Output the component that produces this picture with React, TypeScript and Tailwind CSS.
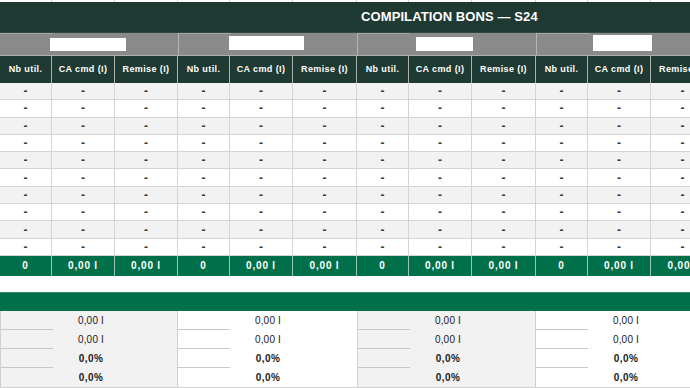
import React from "react"

const cols = "grid grid-cols-[52px_63px_63px_52px_63px_64px_52px_63px_64px_52px_63px_64px]"
const groups = [0, 1, 2, 3]
const groupW = ["w-[178px]", "w-[179px]", "w-[179px]", "w-[179px]"]
const boxes = [
    "ml-[50px] w-[76px] mt-[4px] h-[13px]",
    "ml-[50px] w-[75px] mt-[2px] h-[14px]",
    "ml-[58px] w-[57px] mt-[3px] h-[14px]",
    "ml-[56px] w-[59px] mt-[1px] h-[16px]",
]
const heads = ["Nb util.", "CA cmd (I)", "Remise (I)"]
const totals = ["0", "0,00 I", "0,00 I"]
const lower = [
    { v: "0,00 I", bold: false },
    { v: "0,00 I", bold: false },
    { v: "0,0%", bold: true },
    { v: "0,0%", bold: true },
]

export default function App() {
    return (
        <div className="w-[690px] h-[388px] overflow-hidden bg-white font-['Liberation_Sans',Arial,sans-serif]">
            <div className="w-[715px]">
                {/* top sliver of the sheet above */}
                <div className={`${cols} h-[2px]`}>
                    {Array.from({ length: 12 }).map((_, i) => (
                        <div key={i} className="border-r border-[#d4d4d4]" />
                    ))}
                </div>

                {/* title */}
                <div className="h-[31px] bg-[#1f3a32] flex items-center pl-[361px] border-b border-[#2c4a41]">
                    <span className="text-white font-bold text-[13px] tracking-[0.1px]">COMPILATION BONS — S24</span>
                </div>

                {/* week boxes */}
                <div className="flex h-[22px] bg-[#8a8a8a]">
                    {groups.map((g) => (
                        <div key={g} className={`${groupW[g]} h-full ${g > 0 ? "border-l border-[#b4b4b4]" : ""}`}>
                            <div className="h-px w-[52px] bg-[#a6a6a6]" />
                            <div className={`${boxes[g]} bg-white`} />
                        </div>
                    ))}
                </div>

                {/* column headers */}
                <div className={`${cols} h-[28px] bg-[#1f3a32] border-t border-[#a9b2ae]`}>
                    {groups.flatMap((g) =>
                        heads.map((h, i) => (
                            <div
                                key={`${g}-${i}`}
                                className="flex items-center justify-center border-r border-[#a9b2ae] text-white font-bold text-[9px] tracking-[0.4px]"
                            >
                                {h}
                            </div>
                        ))
                    )}
                </div>

                {/* empty rows */}
                {Array.from({ length: 10 }).map((_, r) => (
                    <div
                        key={r}
                        className={`${cols} h-[17.3px] border-b border-[#d4d4d4] ${r % 2 === 0 ? "bg-[#f2f2f2]" : "bg-white"}`}
                    >
                        {Array.from({ length: 12 }).map((_, i) => (
                            <div
                                key={i}
                                className="flex items-center justify-center border-r border-[#d4d4d4] text-[12px] font-bold text-[#3a3a3a] leading-none"
                            >
                                -
                            </div>
                        ))}
                    </div>
                ))}

                {/* totals */}
                <div className={`${cols} h-[20px] bg-[#00704a]`}>
                    {groups.flatMap((g) =>
                        totals.map((t, i) => (
                            <div
                                key={`${g}-${i}`}
                                className="flex items-center justify-center border-r border-[#9cc4b2] text-white font-bold text-[10px] tracking-[0.8px]"
                            >
                                {t}
                            </div>
                        ))
                    )}
                </div>

                <div className="h-[16px]" />

                <div className="h-[19px] bg-[#00704a] border-t border-[#2f8a66]" />

                {/* summary */}
                <div className="flex">
                    {groups.map((g) => {
                        const bg = g % 2 === 0 ? "bg-[#f2f2f2]" : "bg-white"
                        return (
                            <div
                                key={g}
                                className={`${groupW[g]} flex flex-col ${bg} ${g % 2 === 0 ? "border-x border-[#d0d0d0]" : ""} border-b border-[#d0d0d0]`}
                            >
                                {lower.map((l, i) => (
                                    <div key={i} className="flex h-[19px]">
                                        <div className={`w-[52px] shrink-0 ${i < 3 ? "border-b border-[#c8c8c8]" : ""}`} />
                                        <div
                                            className={`w-[76px] flex items-center justify-center text-[10px] text-[#1a1a1a] ${l.bold ? "font-bold tracking-[0.4px]" : "tracking-[0.2px]"}`}
                                        >
                                            {l.v}
                                        </div>
                                    </div>
                                ))}
                            </div>
                        )
                    })}
                </div>
            </div>
        </div>
    )
}
